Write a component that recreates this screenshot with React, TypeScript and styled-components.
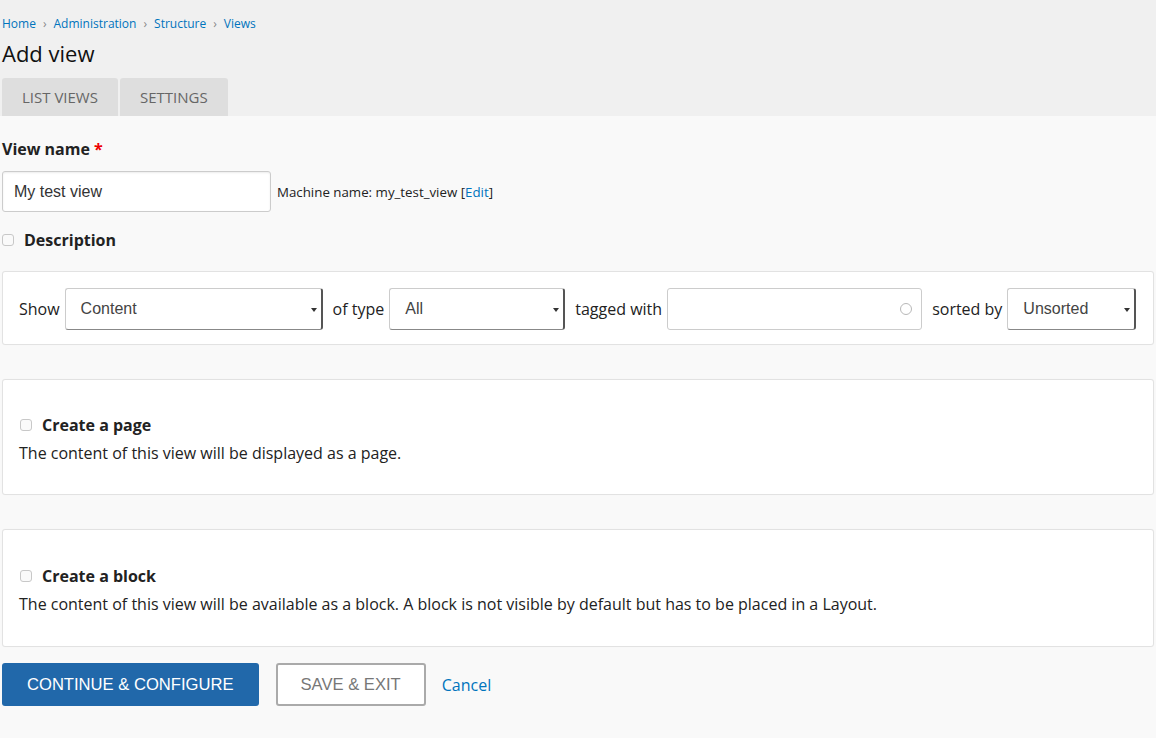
import React from "react";
import styled, { createGlobalStyle } from "styled-components";

const GlobalStyle = createGlobalStyle`
  html, body {
    margin: 0;
    padding: 0;
    background: #f9f9f9;
    color: #222;
    font-family: "Open Sans", "Liberation Sans", sans-serif;
  }
`;

const App = () => {
  return (
    <>
      <GlobalStyle />
      <Header>
        <Breadcrumb>
          <Crumb href="#">Home</Crumb>
          <Sep>›</Sep>
          <Crumb href="#">Administration</Crumb>
          <Sep>›</Sep>
          <Crumb href="#">Structure</Crumb>
          <Sep>›</Sep>
          <Crumb href="#">Views</Crumb>
        </Breadcrumb>
        <Title>Add view</Title>
        <Tabs>
          <Tab>List views</Tab>
          <Tab>Settings</Tab>
        </Tabs>
      </Header>

      <Main>
        <FieldLabel>
          View name <Required>*</Required>
        </FieldLabel>
        <NameRow>
          <TextInput defaultValue="My test view" />
          <MachineName>
            Machine name: my_test_view [<Link href="#">Edit</Link>]
          </MachineName>
        </NameRow>

        <CheckRow>
          <Checkbox />
          <CheckLabel>Description</CheckLabel>
        </CheckRow>

        <Panel $pad="16px 16px 14px">
          <ShowRow>
            <InlineLabel>Show</InlineLabel>
            <Select $width="258px">
              <span>Content</span>
              <Arrow />
            </Select>
            <InlineLabel>of type</InlineLabel>
            <Select $width="176px">
              <span>All</span>
              <Arrow />
            </Select>
            <InlineLabel>tagged with</InlineLabel>
            <TagInput>
              <Throbber />
            </TagInput>
            <InlineLabel>sorted by</InlineLabel>
            <Select $width="129px">
              <span>Unsorted</span>
              <Arrow />
            </Select>
          </ShowRow>
        </Panel>

        <Panel $pad="34px 16px 29px" $gap="34px">
          <CheckRow $inset>
            <Checkbox />
            <CheckLabel>Create a page</CheckLabel>
          </CheckRow>
          <Help>The content of this view will be displayed as a page.</Help>
        </Panel>

        <Panel $pad="35px 16px 30px" $gap="34px">
          <CheckRow $inset>
            <Checkbox />
            <CheckLabel>Create a block</CheckLabel>
          </CheckRow>
          <Help>
            The content of this view will be available as a block. A block is
            not visible by default but has to be placed in a Layout.
          </Help>
        </Panel>

        <Actions>
          <PrimaryButton>Continue &amp; configure</PrimaryButton>
          <SecondaryButton>Save &amp; exit</SecondaryButton>
          <CancelLink href="#">Cancel</CancelLink>
        </Actions>
      </Main>
    </>
  );
};

const Header = styled.header`
  background: #f0f0f0;
  padding: 16px 2px 0;
`;

const Breadcrumb = styled.nav`
  display: flex;
  align-items: center;
  font-size: 12px;
  line-height: 16px;
`;

const Crumb = styled.a`
  color: #0074bd;
  text-decoration: none;
`;

const Sep = styled.span`
  color: #888;
  margin: 0 7px;
  font-size: 12px;
`;

const Title = styled.h1`
  margin: 7px 0 11px;
  font-size: 22px;
  line-height: 28px;
  font-weight: 400;
  color: #111;
`;

const Tabs = styled.div`
  display: flex;
  gap: 2px;
`;

const Tab = styled.div`
  background: #dedede;
  color: #666;
  text-transform: uppercase;
  font-size: 15px;
  height: 38px;
  line-height: 38px;
  padding: 0 20px;
  border-radius: 3px 3px 0 0;
`;

const Main = styled.main`
  padding: 23px 2px 32px;
`;

const FieldLabel = styled.div`
  font-weight: 700;
  font-size: 16px;
  line-height: 20px;
  margin-bottom: 12px;
`;

const Required = styled.span`
  color: #e00;
`;

const NameRow = styled.div`
  display: flex;
  align-items: center;
  gap: 6px;
`;

const TextInput = styled.input`
  box-sizing: border-box;
  width: 269px;
  height: 41px;
  border: 1px solid #ccc;
  border-radius: 3px;
  padding: 0 11px;
  font-family: "Liberation Sans", Arial, sans-serif;
  font-size: 16px;
  color: #333;
  background: #fff;
  box-shadow: inset 0 1px 2px rgba(0, 0, 0, 0.08);
  outline: none;
`;

const MachineName = styled.span`
  font-size: 13.3px;
  color: #222;
`;

const Link = styled.a`
  color: #0074bd;
  text-decoration: none;
`;

const CheckRow = styled.div<{ $inset?: boolean }>`
  display: flex;
  align-items: center;
  gap: 10px;
  height: 22px;
  margin-top: ${(p) => (p.$inset ? "0" : "17px")};
  margin-left: ${(p) => (p.$inset ? "1px" : "0")};
`;

const Checkbox = styled.span`
  box-sizing: border-box;
  width: 12px;
  height: 12px;
  border: 1px solid #c8c8c8;
  border-radius: 3px;
  background: #fafafa;
`;

const CheckLabel = styled.span`
  font-weight: 700;
  font-size: 16px;
  line-height: 22px;
`;

const Panel = styled.section<{ $pad: string; $gap?: string }>`
  margin-top: ${(p) => p.$gap || "20px"};
  background: #fff;
  border: 1px solid #e2e2e2;
  border-radius: 3px;
  padding: ${(p) => p.$pad};
  box-shadow: 0 0 1px rgba(0, 0, 0, 0.05);
`;

const ShowRow = styled.div`
  display: flex;
  align-items: center;
`;

const InlineLabel = styled.span`
  font-size: 16px;
  margin: 0 5px 0 10px;
  &:first-child {
    margin-left: 0;
  }
`;

const Select = styled.div<{ $width: string }>`
  box-sizing: border-box;
  position: relative;
  width: ${(p) => p.$width};
  height: 42px;
  display: flex;
  align-items: center;
  padding-left: 15px;
  background: #fff;
  border: 1px solid #ccc;
  border-right: 2px solid #555;
  border-bottom-color: #888;
  border-radius: 3px;
  font-family: "Liberation Sans", Arial, sans-serif;
  font-size: 16px;
  color: #444;
`;

const Arrow = styled.span`
  position: absolute;
  right: 4px;
  top: 19px;
  width: 0;
  height: 0;
  border-left: 3px solid transparent;
  border-right: 3px solid transparent;
  border-top: 4px solid #333;
`;

const TagInput = styled.div`
  box-sizing: border-box;
  width: 255px;
  height: 42px;
  display: flex;
  align-items: center;
  justify-content: flex-end;
  padding-right: 9px;
  background: #fff;
  border: 1px solid #ccc;
  border-radius: 3px;
`;

const Throbber = styled.span`
  box-sizing: border-box;
  width: 12px;
  height: 12px;
  border: 1.5px solid #b8b8b8;
  border-radius: 50%;
`;

const Help = styled.p`
  margin: 5px 0 0;
  font-size: 16px;
  line-height: 24px;
  color: #222;
`;

const Actions = styled.div`
  display: flex;
  align-items: center;
  margin-top: 16px;
`;

const PrimaryButton = styled.button`
  height: 43px;
  padding: 0 25px;
  border: none;
  border-radius: 3px;
  background: #2168aa;
  color: #fff;
  font-family: "Liberation Sans", Arial, sans-serif;
  font-size: 16.6px;
  text-transform: uppercase;
`;

const SecondaryButton = styled.button`
  margin-left: 17px;
  height: 43px;
  padding: 0 23px;
  border: 2px solid #aaa;
  border-radius: 3px;
  background: #fff;
  color: #777;
  font-family: "Liberation Sans", Arial, sans-serif;
  font-size: 16.6px;
  text-transform: uppercase;
`;

const CancelLink = styled.a`
  margin-left: 16px;
  color: #0074bd;
  font-size: 16px;
  text-decoration: none;
`;

export default App;
